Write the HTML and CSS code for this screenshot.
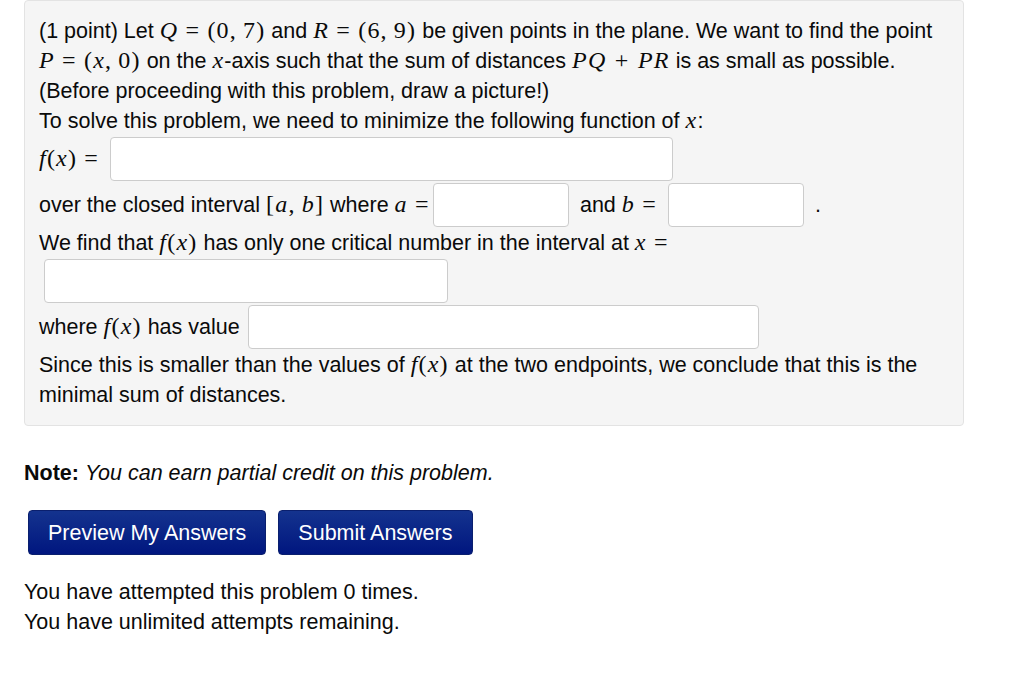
FILE: index.html
```html
<!DOCTYPE html>
<html>
<head>
<meta charset="utf-8">
<link rel="stylesheet" href="styles.css">
</head>
<body>
<div class="page">
  <div class="well">
    <p class="line">(1 point) Let <span class="m"><i>Q</i><span class="rel">=</span>(0,&thinsp;7)</span> and <span class="m"><i>R</i><span class="rel">=</span>(6,&thinsp;9)</span> be given points in the plane. We want to find the point</p>
    <p class="line"><span class="m"><i>P</i><span class="rel">=</span>(<i>x</i>,&thinsp;0)</span> on the <span class="m"><i>x</i></span>-axis such that the sum of distances <span class="m"><i>PQ</i><span class="bin">+</span><i>PR</i></span> is as small as possible.</p>
    <p class="line">(Before proceeding with this problem, draw a picture!)</p>
    <p class="line">To solve this problem, we need to minimize the following function of <span class="m"><i>x</i></span>:</p>
    <p class="row"><span class="m"><i>f</i>(<i>x</i>)<span class="rel">=</span></span><span class="inp w-f"></span></p>
    <p class="row">over the closed interval <span class="m">[<i>a</i>,&thinsp;<i>b</i>]</span> where <span class="m"><i>a</i><span class="rel">=</span></span><span class="inp w-a first"></span> <span class="gap">and <span class="m"><i>b</i><span class="rel">=</span></span></span><span class="inp w-a"></span> <span class="dot">.</span></p>
    <p class="line">We find that <span class="m"><i>f</i>(<i>x</i>)</span> has only one critical number in the interval at <span class="m"><i>x</i><span class="rel">=</span></span></p>
    <p class="row indent"><span class="inp w-x"></span></p>
    <p class="row">where <span class="m"><i>f</i>(<i>x</i>)</span> has value <span class="inp w-v"></span></p>
    <p class="line">Since this is smaller than the values of <span class="m"><i>f</i>(<i>x</i>)</span> at the two endpoints, we conclude that this is the</p>
    <p class="line">minimal sum of distances.</p>
  </div>

  <p class="note"><b>Note:</b> <i>You can earn partial credit on this problem.</i></p>

  <div class="buttons">
    <span class="btn">Preview My Answers</span>
    <span class="btn">Submit Answers</span>
  </div>

  <p class="line">You have attempted this problem 0 times.</p>
  <p class="line">You have unlimited attempts remaining.</p>
</div>
</body>
</html>
```

FILE: styles.css
```css
html, body {
  margin: 0;
  padding: 0;
  background: #ffffff;
}

body {
  font-family: "Liberation Sans", Arial, sans-serif;
  font-size: 21.5px;
  color: #0a0a0a;
}

.page {
  padding: 0 0 0 24px;
  width: 940px;
}

.well {
  background: #f5f5f5;
  border: 1px solid #e3e3e3;
  border-radius: 4px;
  padding: 15px 14px 15px 14px;
}

p {
  margin: 0;
}

.line {
  line-height: 30px;
  height: 30px;
  white-space: nowrap;
}

.row {
  line-height: 46px;
  height: 46px;
  white-space: nowrap;
}

.indent {
  padding-left: 5px;
}

.m {
  font-family: "Liberation Serif", "Times New Roman", serif;
  font-size: 24px;
  line-height: 1;
  white-space: nowrap;
  letter-spacing: 0.05em;
}

.m i {
  font-style: italic;
}

.rel {
  margin: 0 0.3em;
}

.bin {
  margin: 0 0.35em;
}

.inp {
  display: inline-block;
  vertical-align: middle;
  height: 44px;
  box-sizing: border-box;
  background: #ffffff;
  border: 1px solid #cccccc;
  border-radius: 4px;
  margin-left: 4px;
  position: relative;
  top: -1px;
}

.w-f { width: 563px; margin-left: 4px; }
.w-a { width: 136px; }
.w-a.first { margin-left: -4px; }
.w-x { width: 404px; margin-left: 0; }
.w-v { width: 511px; margin-left: 2px; }

.gap {
  margin-left: 5px;
}

.dot {
  margin-left: 5px;
}

.note {
  margin-top: 32px;
  line-height: 30px;
}

.buttons {
  display: flex;
  gap: 12px;
  margin: 22px 0 22px 4px;
}

.btn {
  display: inline-block;
  height: 45px;
  line-height: 44px;
  box-sizing: border-box;
  padding: 0 19px;
  color: #ffffff;
  border-radius: 4px;
  border: 1px solid #0a1f6e;
  background: linear-gradient(#14338e, #00167f);
}
```
